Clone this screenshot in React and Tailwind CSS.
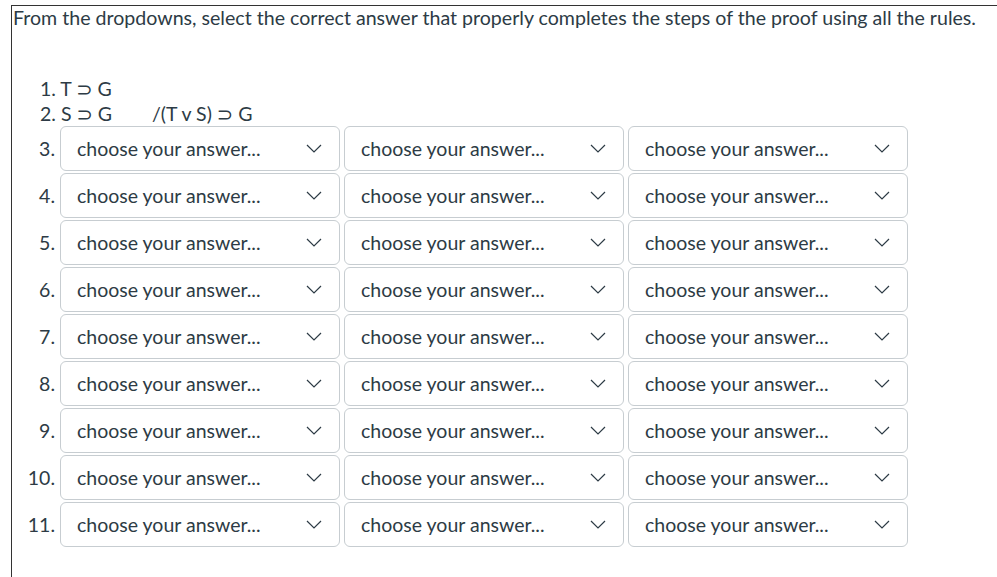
import React from "react";

const Chevron = () => (
  <svg width="16" height="9" viewBox="0 0 16 9" fill="none" className="shrink-0">
    <polyline points="1,1 8,8 15,1" stroke="#2d3b45" strokeWidth="1.2" fill="none" />
  </svg>
);

const Select = () => (
  <div className="w-[280px] h-[45px] shrink-0 rounded-[6px] border border-[#c7cdd1] bg-white flex items-center justify-between pl-[16px] pr-[17px]">
    <span className="text-[19.5px] text-[#2d3b45]">choose your answer...</span>
    <Chevron />
  </div>
);

export default function App() {
  const rows = [3, 4, 5, 6, 7, 8, 9, 10, 11];
  return (
    <div className="w-[997px] h-[577px] bg-white overflow-hidden pt-[5px] pl-[11px]" style={{ fontFamily: "Lato, 'Noto Sans', 'DejaVu Sans', sans-serif" }}>
      <div className="border-t border-l border-[#333333] h-[572px] text-[#2d3b45]">
        <p className="text-[19.6px] leading-[24px] pl-[1px] whitespace-nowrap">
          From the dropdowns, select the correct answer that properly completes the steps of the proof using all the rules.
        </p>
        <div className="mt-[46px] pl-[28px] text-[19.5px] leading-[25px]">
          <div>1. T ⊃ G</div>
          <div className="flex">
            <span className="w-[112px]">2. S ⊃ G</span>
            <span>/(T v S) ⊃ G</span>
          </div>
        </div>
        <div className="flex flex-col gap-[2px]">
          {rows.map((n) => (
            <div key={n} className="flex items-center">
              <span className="w-[44px] text-right text-[19.5px] pr-[1px]">{n}.</span>
              <div className="ml-[4px] flex gap-[4px]">
                <Select />
                <Select />
                <Select />
              </div>
            </div>
          ))}
        </div>
      </div>
    </div>
  );
}
